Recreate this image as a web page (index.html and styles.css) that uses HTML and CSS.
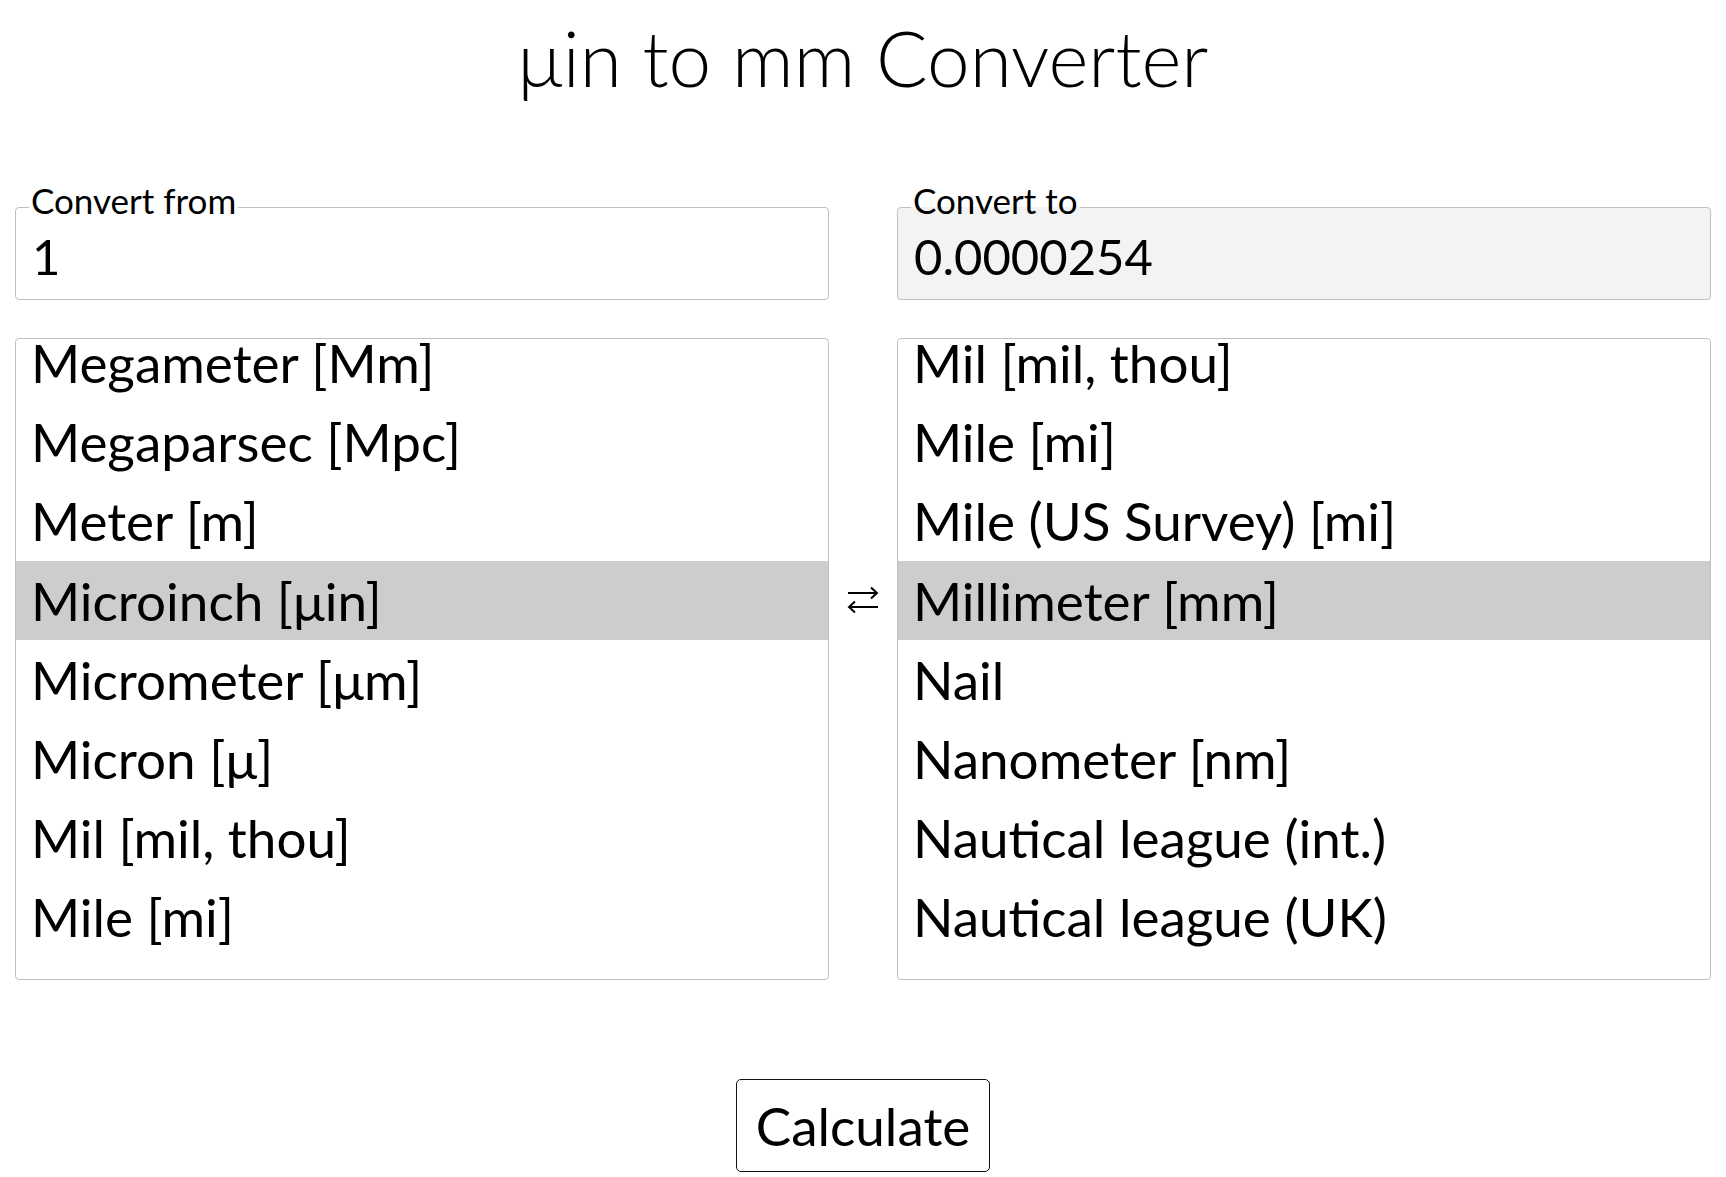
FILE: index.html
```html
<!DOCTYPE html>
<html lang="en">
<head>
    <meta charset="UTF-8">
    <meta name="viewport" content="width=device-width, initial-scale=1.0">
    <title>μin to mm Converter</title>
    <link rel="stylesheet" href="styles.css">
</head>
<body>

<main class="converter">
    <h1 class="title">μin to mm Converter</h1>

    <div class="panels">
        <fieldset class="field">
            <legend>Convert from</legend>
            <input class="field-input" type="text" id="fromValue" value="1">
        </fieldset>

        <div></div>

        <fieldset class="field field-readonly">
            <legend>Convert to</legend>
            <input class="field-input" type="text" id="toValue" value="0.0000254" readonly>
        </fieldset>

        <div class="unit-list">
            <ul>
                <li>Megameter [Mm]</li>
                <li>Megaparsec [Mpc]</li>
                <li>Meter [m]</li>
                <li class="selected">Microinch [μin]</li>
                <li>Micrometer [μm]</li>
                <li>Micron [μ]</li>
                <li>Mil [mil, thou]</li>
                <li>Mile [mi]</li>
            </ul>
        </div>

        <div class="swap" title="Swap units">
            <svg width="32" height="30" viewBox="0 0 32 30" fill="none" stroke="#000" stroke-width="2">
                <path d="M1 8h29"/>
                <path d="M24 2.5l6 5.5-6 5.5"/>
                <path d="M3 22h28"/>
                <path d="M8 16.5l-6 5.5 6 5.5"/>
            </svg>
        </div>

        <div class="unit-list">
            <ul>
                <li>Mil [mil, thou]</li>
                <li>Mile [mi]</li>
                <li>Mile (US Survey) [mi]</li>
                <li class="selected">Millimeter [mm]</li>
                <li>Nail</li>
                <li>Nanometer [nm]</li>
                <li>Nautical league (int.)</li>
                <li>Nautical league (UK)</li>
            </ul>
        </div>
    </div>

    <div class="actions">
        <button type="button" class="calc-btn">Calculate</button>
    </div>
</main>

</body>
</html>
```

FILE: styles.css
```css
body {
    margin: 0;
    font-family: Lato, 'Open Sans', sans-serif;
    color: #000;
    background-color: #fff;
}

.converter {
    padding: 0 15px;
}

.title {
    margin: 10px 0 0;
    font-size: 76.5px;
    font-weight: 300;
    line-height: 95px;
    text-align: center;
}

.panels {
    display: grid;
    grid-template-columns: 814px 68px 814px;
    margin-top: 85px;
}

/* fieldset boxes */
.field {
    margin: 0;
    padding: 0 16px;
    border: 1px solid #c0c0c0;
    border-radius: 4px;
    min-width: 0;
}

.field legend {
    padding: 0 2px 15px;
    margin-left: -3px;
    font-size: 35px;
    line-height: 20px;
}

.field-readonly {
    background-color: #f3f3f3;
}

.field-input {
    display: block;
    width: 100%;
    height: 74px;
    padding: 2px 0 14px;
    border: none;
    outline: none;
    background: transparent;
    font-family: inherit;
    font-size: 49px;
    line-height: 58px;
    color: #000;
    box-sizing: border-box;
}

/* list boxes */
.unit-list {
    margin-top: 38px;
    height: 640px;
    border: 1px solid #c0c0c0;
    border-radius: 4px;
    overflow: hidden;
}

.unit-list ul {
    list-style: none;
    margin: -16px 0 0;
    padding: 0;
}

.unit-list li {
    padding: 0 15px;
    font-size: 53px;
    line-height: 79.2px;
    white-space: nowrap;
}

.unit-list li.selected {
    background-color: #cdcdcd;
}

.swap {
    display: flex;
    justify-content: center;
    padding-top: 285px;
}

.actions {
    display: flex;
    justify-content: center;
    margin-top: 99px;
}

.calc-btn {
    height: 93px;
    padding: 0 19px;
    border: 1px solid #111;
    border-radius: 5px;
    background-color: #fff;
    font-family: inherit;
    font-size: 53px;
    color: #000;
    cursor: pointer;
}
```
